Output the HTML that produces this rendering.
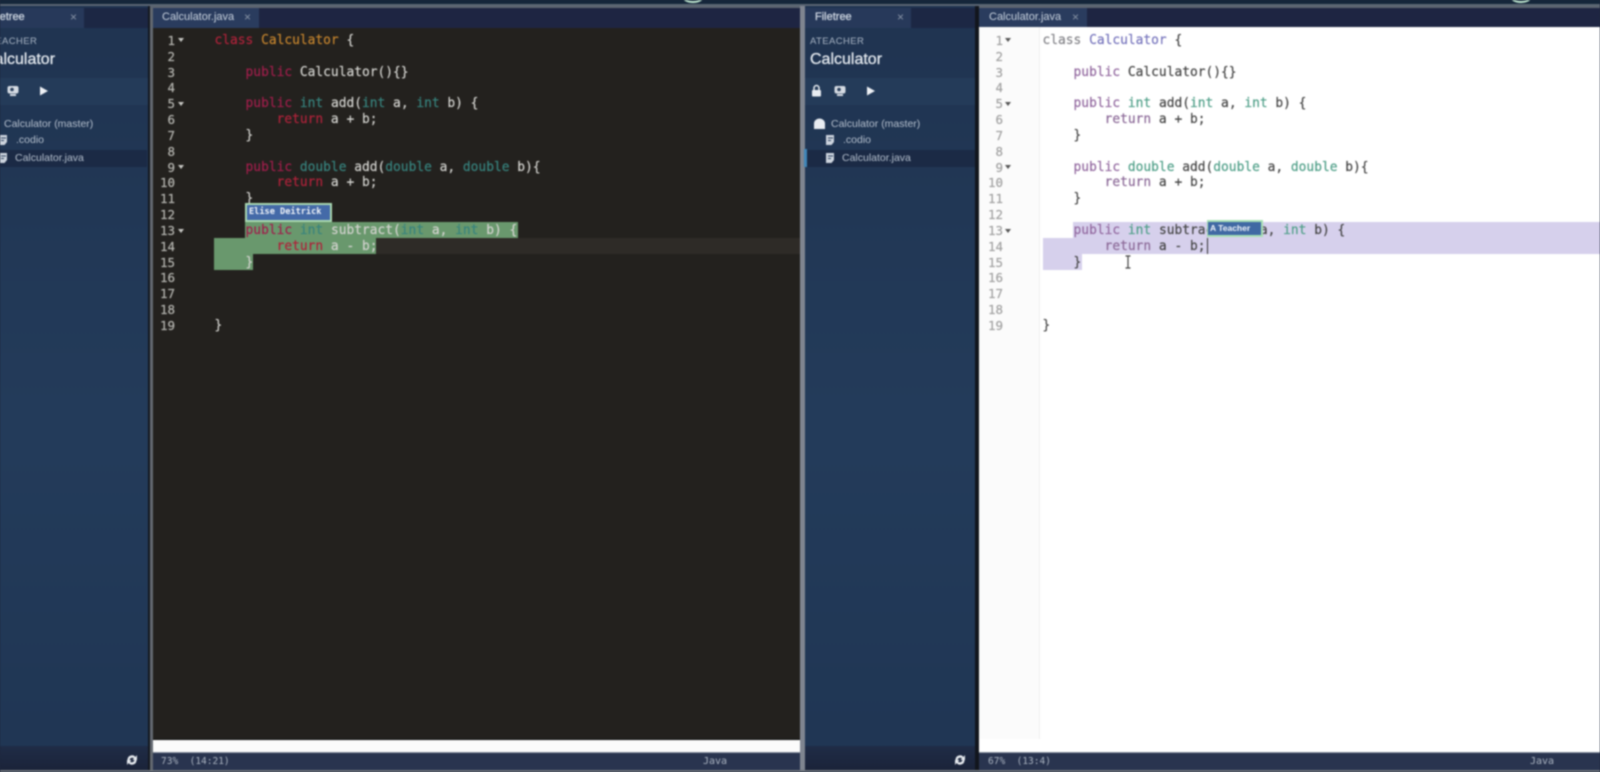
<!DOCTYPE html>
<html><head><meta charset="utf-8">
<style>
html,body{margin:0;padding:0;background:#20283c;}
#s{position:relative;width:1600px;height:772px;overflow:hidden;background:#1d2438;font-family:"Liberation Sans",sans-serif;filter:blur(.8px);}
.a{position:absolute;}
.code{position:absolute;top:33px;margin:0;font:12.9px/15.83px "DejaVu Sans Mono",monospace;white-space:pre;-webkit-text-stroke:.2px;}
.nums{position:absolute;top:33px;margin:0;font:12.5px/15.83px "DejaVu Sans Mono",monospace;white-space:pre;text-align:right;width:40px;-webkit-text-stroke:.2px;}
.dk{color:#d2d2ce}.dk b,.lt b{font-weight:normal}
.dk .k{color:#a01e4b}.dk .r{color:#ae223a}.dk .c{color:#c4842e}.dk .t{color:#37837e}
.lt{color:#454545}.lt .k{color:#92689f}.lt .r{color:#8c6a98}.lt .c{color:#7674bc}.lt .t{color:#4f9f88}.lt .g{color:#85858a}
.side{background:linear-gradient(#1f3350,#233b5a 55%,#1f3553);}
.tx{color:#b4bfcd;font-size:10.5px;white-space:nowrap;}
.x{color:#8793a5;font-size:12px;}
.ft{color:#d3dbe5;font-size:11px;line-height:14px;-webkit-text-stroke:.25px;}
</style></head><body>
<div id="s">
<!-- top strip -->
<div class="a" style="left:0;top:0;width:1600px;height:4px;background:#14263a"></div>
<div class="a" style="left:0;top:4px;width:1600px;height:2px;background:#5b6673"></div>
<div class="a" style="left:683px;top:-7px;width:20px;height:10px;border:2px solid #bfe8d0;border-radius:50%;box-sizing:border-box"></div>
<div class="a" style="left:1511px;top:-7px;width:20px;height:10px;border:2px solid #bfe8d0;border-radius:50%;box-sizing:border-box"></div>

<!-- LEFT SIDEBAR -->
<div class="a side" style="left:0;top:6px;width:148px;height:766px"></div>
<div class="a" style="left:0;top:8px;width:148px;height:20px;background:#1c2744"></div>
<div class="a" style="left:0;top:8px;width:84px;height:20px;background:#27395a"></div>
<div class="a ft" style="left:-12px;top:10px">Filetree</div>
<div class="a x" style="left:70px;top:10px">×</div>
<div class="a" style="left:-17px;top:36px;color:#a9b5c4;font-size:9.5px;letter-spacing:.4px;line-height:12px">ATEACHER</div>
<div class="a" style="left:-17px;top:50px;color:#e3e8ee;font-size:16px;line-height:19px;-webkit-text-stroke:.3px">Calculator</div>
<div class="a" style="left:0;top:78px;width:148px;height:27px;background:#243b59"></div>
<svg class="a" style="left:6px;top:84px" width="14" height="14" viewBox="0 0 14 14"><rect x="1.5" y="2" width="11" height="7.5" rx="2" fill="#d5dbe3"/><circle cx="6" cy="5.5" r="1.8" fill="#2a3f5c"/><rect x="4" y="10" width="6" height="2" fill="#d5dbe3"/></svg>
<svg class="a" style="left:39px;top:85px" width="10" height="12" viewBox="0 0 10 12"><path d="M1 1.5 9 6 1 10.5Z" fill="#eef1f5"/></svg>
<div class="a" style="left:0;top:150px;width:147px;height:17px;background:#1b2a45"></div>
<div class="a tx" style="left:4px;top:117px;line-height:14px">Calculator (master)</div>
<div class="a tx" style="left:16px;top:133px;line-height:14px">.codio</div>
<div class="a tx" style="left:15px;top:151px;line-height:14px">Calculator.java</div>
<svg class="a" style="left:-2px;top:134px" width="11" height="12" viewBox="0 0 11 12"><path d="M1 1h8v7L6.500 11H1Z" fill="#cdd4de"/><path d="M3 4h5M3 6.500h3" stroke="#2a3f5c"/></svg>
<svg class="a" style="left:-2px;top:152px" width="11" height="12" viewBox="0 0 11 12"><path d="M1 1h8v7L6.500 11H1Z" fill="#cdd4de"/><path d="M3 4h5M3 6.500h3" stroke="#2a3f5c"/></svg>
<div class="a" style="left:0;top:746px;width:148px;height:26px;background:linear-gradient(#1f2c46,#1a2238)"></div>
<svg class="a" style="left:126px;top:754px" width="12" height="12" viewBox="0 0 12 12"><path d="M1.500 6A4.500 4.500 0 0 1 9.500 3L11 1v5H6.500l1.500-1.700A2.800 2.800 0 0 0 3.500 6ZM10.500 6A4.500 4.500 0 0 1 2.500 9L1 11V6h4.500L4 7.700A2.800 2.800 0 0 0 8.500 6Z" fill="#e6eaef"/></svg>

<!-- LEFT EDITOR -->
<div class="a" style="left:148px;top:6px;width:2px;height:766px;background:#14181f"></div>
<div class="a" style="left:150px;top:6px;width:3px;height:766px;background:#626870"></div>
<div class="a" style="left:150px;top:6px;width:650px;height:2px;background:#5c6570"></div>
<div class="a" style="left:153px;top:8px;width:647px;height:20px;background:#1e2542"></div>
<div class="a" style="left:153px;top:8px;width:106px;height:20px;background:#2a3c5e"></div>
<div class="a" style="left:162px;top:10px;color:#c8d2de;font-size:11px;line-height:14px">Calculator.java</div>
<div class="a x" style="left:244px;top:10px">×</div>
<div class="a" style="left:153px;top:28px;width:647px;height:711px;background:#23211e"></div>
<div class="a" style="left:376px;top:238px;width:424px;height:16px;background:#2e2b27"></div>
<div class="a" style="left:245px;top:222px;width:273px;height:16px;background:#69986d"></div>
<div class="a" style="left:214px;top:238px;width:162px;height:16px;background:#69986d"></div>
<div class="a" style="left:214px;top:254px;width:39px;height:16px;background:#69986d"></div>
<pre class="nums" style="left:135px;color:#b5b5b0">1
2
3
4
5
6
7
8
9
10
11
12
13
14
15
16
17
18
19</pre>
<div class="a" style="left:178px;top:38px;width:0;height:0;border:3px solid transparent;border-top:4px solid #c8c8c4;border-bottom:0"></div>
<div class="a" style="left:178px;top:102px;width:0;height:0;border:3px solid transparent;border-top:4px solid #c8c8c4;border-bottom:0"></div>
<div class="a" style="left:178px;top:165px;width:0;height:0;border:3px solid transparent;border-top:4px solid #c8c8c4;border-bottom:0"></div>
<div class="a" style="left:178px;top:229px;width:0;height:0;border:3px solid transparent;border-top:4px solid #c8c8c4;border-bottom:0"></div>
<pre class="code dk" style="left:214.500px"><b class="r">class</b> <b class="c">Calculator</b> {

    <b class="k">public</b> Calculator(){}

    <b class="k">public</b> <b class="t">int</b> add(<b class="t">int</b> a, <b class="t">int</b> b) {
        <b class="r">return</b> a + b;
    }

    <b class="k">public</b> <b class="t">double</b> add(<b class="t">double</b> a, <b class="t">double</b> b){
        <b class="r">return</b> a + b;
    }

    <b class="k">public</b> <b class="t">int</b> subtract(<b class="t">int</b> a, <b class="t">int</b> b) {
        <b class="r">return</b> a - b;
    }



}</pre>
<div class="a" style="left:245px;top:203px;width:87px;height:19px;box-sizing:border-box;border:2px solid #a9d8b0;background:#446aa8;color:#f2f5fa;font:bold 8.600px/14px 'DejaVu Sans Mono',monospace;padding-left:2px;white-space:nowrap;overflow:hidden">Elise Deitrick</div>
<div class="a" style="left:153px;top:739px;width:647px;height:1px;background:#111"></div>
<div class="a" style="left:153px;top:740px;width:647px;height:12px;background:#fbfbfb"></div>
<div class="a" style="left:153px;top:752px;width:647px;height:20px;background:#29344f;border-top:1px solid #8a93a0;box-sizing:border-box"></div>
<div class="a" style="left:161px;top:755px;color:#aab3c0;font:9.500px/14px 'DejaVu Sans Mono',monospace;white-space:pre">73%  (14:21)</div>
<div class="a" style="left:703px;top:755px;color:#aab3c0;font:10px/14px 'DejaVu Sans Mono',monospace">Java</div>

<!-- RIGHT SIDEBAR -->
<div class="a" style="left:800px;top:6px;width:5px;height:766px;background:#7f8590"></div>
<div class="a side" style="left:805px;top:6px;width:170px;height:766px"></div>
<div class="a" style="left:975px;top:6px;width:4px;height:766px;background:#12161d"></div>
<div class="a" style="left:805px;top:8px;width:170px;height:20px;background:#1c2744"></div>
<div class="a" style="left:805px;top:8px;width:106px;height:20px;background:#27395a"></div>
<div class="a ft" style="left:815px;top:10px">Filetree</div>
<div class="a x" style="left:897px;top:10px">×</div>
<div class="a" style="left:810px;top:36px;color:#a9b5c4;font-size:9.500px;letter-spacing:.4px;line-height:12px">ATEACHER</div>
<div class="a" style="left:810px;top:50px;color:#e3e8ee;font-size:16px;line-height:19px;-webkit-text-stroke:.3px">Calculator</div>
<div class="a" style="left:805px;top:78px;width:170px;height:27px;background:#243b59"></div>
<svg class="a" style="left:811px;top:84px" width="11" height="13" viewBox="0 0 11 13"><path d="M3 6V4a2.500 2.500 0 0 1 5 0v2" fill="none" stroke="#e8ecf1" stroke-width="1.500"/><rect x="1" y="6" width="9" height="6.500" rx="1" fill="#e8ecf1"/></svg>
<svg class="a" style="left:833px;top:84px" width="14" height="14" viewBox="0 0 14 14"><rect x="1.500" y="2" width="11" height="7.500" rx="2" fill="#d5dbe3"/><circle cx="6" cy="5.500" r="1.800" fill="#2a3f5c"/><rect x="4" y="10" width="6" height="2" fill="#d5dbe3"/></svg>
<svg class="a" style="left:866px;top:85px" width="10" height="12" viewBox="0 0 10 12"><path d="M1 1.500 9 6 1 10.500Z" fill="#eef1f5"/></svg>
<div class="a" style="left:806px;top:150px;width:169px;height:17px;background:#1b2a45"></div>
<div class="a" style="left:804px;top:149px;width:3px;height:18px;background:#3f86b8"></div>
<svg class="a" style="left:813px;top:117px" width="13" height="13" viewBox="0 0 13 13"><path d="M1 12V6.500A5.500 5 0 0 1 12 6.500V12Z" fill="#e8ecf1"/></svg>
<div class="a tx" style="left:831px;top:117px;line-height:14px">Calculator (master)</div>
<svg class="a" style="left:825px;top:134px" width="11" height="12" viewBox="0 0 11 12"><path d="M1 1h8v7L6.500 11H1Z" fill="#cdd4de"/><path d="M3 4h5M3 6.500h3" stroke="#2a3f5c"/></svg>
<div class="a tx" style="left:843px;top:133px;line-height:14px">.codio</div>
<svg class="a" style="left:825px;top:152px" width="11" height="12" viewBox="0 0 11 12"><path d="M1 1h8v7L6.500 11H1Z" fill="#cdd4de"/><path d="M3 4h5M3 6.500h3" stroke="#2a3f5c"/></svg>
<div class="a tx" style="left:842px;top:151px;line-height:14px">Calculator.java</div>
<div class="a" style="left:805px;top:746px;width:170px;height:26px;background:linear-gradient(#1f2c46,#1a2238)"></div>
<svg class="a" style="left:954px;top:754px" width="12" height="12" viewBox="0 0 12 12"><path d="M1.500 6A4.500 4.500 0 0 1 9.500 3L11 1v5H6.500l1.500-1.700A2.800 2.800 0 0 0 3.500 6ZM10.500 6A4.500 4.500 0 0 1 2.500 9L1 11V6h4.500L4 7.700A2.800 2.800 0 0 0 8.500 6Z" fill="#e6eaef"/></svg>

<!-- RIGHT EDITOR -->
<div class="a" style="left:979px;top:6px;width:621px;height:2px;background:#5c6570"></div>
<div class="a" style="left:979px;top:8px;width:621px;height:19px;background:#1e2542"></div>
<div class="a" style="left:979px;top:8px;width:108px;height:19px;background:#2a3c5e"></div>
<div class="a" style="left:989px;top:10px;color:#c8d2de;font-size:11px;line-height:14px">Calculator.java</div>
<div class="a x" style="left:1072px;top:10px">×</div>
<div class="a" style="left:979px;top:27px;width:621px;height:725px;background:#fff"></div>
<div class="a" style="left:979px;top:27px;width:60px;height:712px;background:#fbfbfb;border-right:1px solid #f0f0f0"></div>
<div class="a" style="left:1073px;top:222px;width:527px;height:16px;background:#d6d0ec"></div>
<div class="a" style="left:1043px;top:238px;width:557px;height:16px;background:#d6d0ec"></div>
<div class="a" style="left:1043px;top:254px;width:39px;height:16px;background:#d6d0ec"></div>
<pre class="nums" style="left:963px;color:#a2a2a2">1
2
3
4
5
6
7
8
9
10
11
12
13
14
15
16
17
18
19</pre>
<div class="a" style="left:1005px;top:38px;width:0;height:0;border:3px solid transparent;border-top:4px solid #555;border-bottom:0"></div>
<div class="a" style="left:1005px;top:102px;width:0;height:0;border:3px solid transparent;border-top:4px solid #555;border-bottom:0"></div>
<div class="a" style="left:1005px;top:165px;width:0;height:0;border:3px solid transparent;border-top:4px solid #555;border-bottom:0"></div>
<div class="a" style="left:1005px;top:229px;width:0;height:0;border:3px solid transparent;border-top:4px solid #555;border-bottom:0"></div>
<pre class="code lt" style="left:1042.500px"><b class="g">class</b> <b class="c">Calculator</b> {

    <b class="k">public</b> Calculator(){}

    <b class="k">public</b> <b class="t">int</b> add(<b class="t">int</b> a, <b class="t">int</b> b) {
        <b class="r">return</b> a + b;
    }

    <b class="k">public</b> <b class="t">double</b> add(<b class="t">double</b> a, <b class="t">double</b> b){
        <b class="r">return</b> a + b;
    }

    <b class="k">public</b> <b class="t">int</b> subtract(<b class="t">int</b> a, <b class="t">int</b> b) {
        <b class="r">return</b> a - b;
    }



}</pre>
<div class="a" style="left:1207px;top:238px;width:1px;height:16px;background:#333"></div>
<div class="a" style="left:1207px;top:220px;width:56px;height:17px;box-sizing:border-box;border:2px solid #a8e0b4;border-left-width:1px;background:#4069a3;color:#f2f5fa;font:bold 8.500px/12px 'Liberation Sans',sans-serif;padding-left:2px;white-space:nowrap;overflow:hidden">A Teacher</div>
<svg class="a" style="left:1124px;top:255px" width="8" height="14" viewBox="0 0 8 14"><path d="M1.500 1H6.500M4 1V13M1.500 13H6.500" stroke="#444" stroke-width="1.200" fill="none"/></svg>
<div class="a" style="left:979px;top:752px;width:621px;height:20px;background:#29344f;border-top:1px solid #8a93a0;box-sizing:border-box"></div>
<div class="a" style="left:988px;top:755px;color:#aab3c0;font:9.500px/14px 'DejaVu Sans Mono',monospace;white-space:pre">67%  (13:4)</div>
<div class="a" style="left:1530px;top:755px;color:#aab3c0;font:10px/14px 'DejaVu Sans Mono',monospace">Java</div>
<div class="a" style="left:0;top:770px;width:1600px;height:2px;background:#6a7078"></div>
</div>
</body></html>
